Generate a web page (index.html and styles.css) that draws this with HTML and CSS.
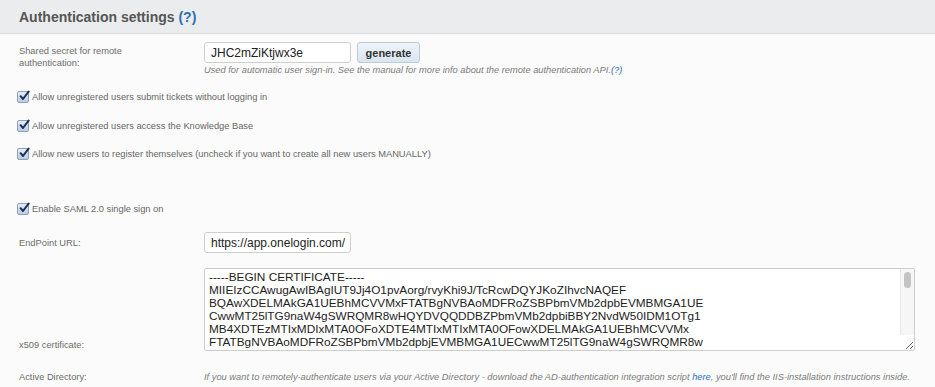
FILE: index.html
```html
<!DOCTYPE html>
<html>
<head>
  <meta http-equiv="Content-type" content="text/html; charset=utf-8">
  <link rel="stylesheet" href="styles.css">
</head>
<body>
<div class="panel">
  <div class="panel-head">
    <h2>Authentication settings <a href="#" class="help">(?)</a></h2>
  </div>

  <div class="panel-body">
    <div class="row row-secret">
      <div class="lbl">Shared secret for remote<br/>authentication:</div>
      <div class="fld">
        <div class="inline">
          <input type="text" class="txt" value="JHC2mZiKtjwx3e" />
          <button class="btn">generate</button>
        </div>
        <div class="hint">Used for automatic user sign-in. See the manual for more info about the remote authentication API.<a href="#" class="help">(?)</a></div>
      </div>
    </div>

    <label class="chk first"><span class="box"><svg viewBox="0 0 12 12"><path d="M2.6 6.2 L5 9 L10.6 1.6" /></svg></span>Allow unregistered users submit tickets without logging in</label>
    <label class="chk"><span class="box"><svg viewBox="0 0 12 12"><path d="M2.6 6.2 L5 9 L10.6 1.6" /></svg></span>Allow unregistered users access the Knowledge Base</label>
    <label class="chk"><span class="box"><svg viewBox="0 0 12 12"><path d="M2.6 6.2 L5 9 L10.6 1.6" /></svg></span>Allow new users to register themselves (uncheck if you want to create all new users MANUALLY)</label>

    <label class="chk saml"><span class="box"><svg viewBox="0 0 12 12"><path d="M2.6 6.2 L5 9 L10.6 1.6" /></svg></span>Enable SAML 2.0 single sign on</label>

    <div class="row row-url">
      <div class="lbl">EndPoint URL:</div>
      <div class="fld"><input type="text" class="txt" value="https://app.onelogin.com/trust/saml2/http-post/sso/123456" /></div>
    </div>

    <div class="row row-cert">
      <div class="lbl">x509 certificate:</div>
      <div class="fld cert-wrap"><textarea class="cert" spellcheck="false">-----BEGIN CERTIFICATE-----
MIIEIzCCAwugAwIBAgIUT9Jj4O1pvAorg/rvyKhi9J/TcRcwDQYJKoZIhvcNAQEF
BQAwXDELMAkGA1UEBhMCVVMxFTATBgNVBAoMDFRoZSBPbmVMb2dpbEVMBMGA1UE
CwwMT25lTG9naW4gSWRQMR8wHQYDVQQDDBZPbmVMb2dpbiBBY2NvdW50IDM1OTg1
MB4XDTEzMTIxMDIxMTA0OFoXDTE4MTIxMTIxMTA0OFowXDELMAkGA1UEBhMCVVMx
FTATBgNVBAoMDFRoZSBPbmVMb2dpbjEVMBMGA1UECwwMT25lTG9naW4gSWRQMR8w
HQYDVQQDDBZPbmVMb2dpbiBBY2NvdW50IDM1OTg1MIIBIjANBgkqhkiG9w0BAQEF
AAOCAQ8AMIIBCgKCAQEAzUYb4hQ8pSx2TQ5cjfQ2yP8HxXwXyQ0Xk8pLqB1rWd9o
V3kP4YJX7mQ1G0f8oS2mZ9kq6Lx2vE3RkF8cN7dA1pQ5yZ8hT0wB4eY6fM2kL9sR
tY3gC1hE7pV2uN5bW8qD4xA0jK6sF9zO3iM1lH2cR7eT5vU8yI0oP6aG4dB3nQ1X
-----END CERTIFICATE-----</textarea><div class="sbar"><div class="thumb"></div></div></div>
    </div>

    <div class="row row-ad">
      <div class="lbl">Active Directory:</div>
      <div class="fld hint">If you want to remotely-authenticate users via your Active Directory - download the AD-authentication integration script <a href="#" class="link">here</a>, you'll find the IIS-installation instructions inside.</div>
    </div>
  </div>
</div>
</body>
</html>
```

FILE: styles.css
```css
body {
  margin: 0;
  background: #fbfbfb;
  font-family: "Liberation Sans", Arial, sans-serif;
  color: #666;
}

.panel {
  width: 935px;
  height: 387px;
  overflow: hidden;
}

.panel-head {
  height: 33px;
  background: #ebeced;
  border-bottom: 1px solid #dadbdc;
  padding-left: 19px;
  display: flex;
  align-items: center;
}

.panel-head h2 {
  margin: 0;
  font-size: 14px;
  font-weight: bold;
  color: #555;
}

.help {
  color: #2c6fb7;
  text-decoration: none;
}

.panel-body {
  padding: 8px 0 0 19px;
  display: flex;
  flex-direction: column;
}

.row {
  display: grid;
  grid-template-columns: 185px auto;
  font-size: 9.3px;
}

.lbl {
  color: #6b6b6b;
  line-height: 12px;
}

.row-secret .lbl {
  padding-top: 3px;
}

.inline {
  display: flex;
  gap: 6px;
  align-items: center;
}

.txt {
  box-sizing: border-box;
  width: 147px;
  height: 21px;
  border: 1px solid #cfcfcf;
  border-radius: 3px;
  background: #fff;
  font-family: "Liberation Sans", Arial, sans-serif;
  font-size: 12px;
  color: #222;
  padding: 0 5px 0 6px;
  margin: 0;
}

.btn {
  box-sizing: border-box;
  width: 63px;
  height: 21px;
  border: 1px solid #bccbd6;
  border-radius: 3px;
  background: linear-gradient(#eef4f9, #d9e6ef);
  font-family: "Liberation Sans", Arial, sans-serif;
  font-size: 11px;
  font-weight: bold;
  color: #333;
  padding: 0;
}

.hint {
  font-style: italic;
  font-size: 9.3px;
  color: #7c7c7c;
  margin-top: 1px;
  line-height: 12px;
}

.chk {
  display: flex;
  align-items: center;
  gap: 3px;
  font-size: 9.3px;
  color: #666;
  height: 12px;
  margin-top: 16.5px;
}

.chk.first {
  margin-top: 15px;
}

.chk.saml {
  margin-top: 43px;
}

.box {
  box-sizing: border-box;
  width: 12px;
  height: 12px;
  border: 1px solid #8aa0bd;
  border-radius: 2px;
  background: linear-gradient(#e7eef8, #b9cbe4);
  position: relative;
  margin-left: -2px;
}

.box svg {
  position: absolute;
  left: 0;
  top: -2px;
  width: 12px;
  height: 12px;
}

.box path {
  fill: none;
  stroke: #1c2f55;
  stroke-width: 2;
  stroke-linecap: round;
  stroke-linejoin: round;
}

.row-url {
  margin-top: 17px;
  align-items: center;
}

.row-cert {
  margin-top: 15px;
  align-items: end;
}

.cert-wrap {
  position: relative;
  width: 711px;
}

.cert {
  box-sizing: border-box;
  width: 711px;
  height: 83px;
  border: 1px solid #cdcdcd;
  border-radius: 2px;
  background: #fff;
  font-family: "Liberation Sans", Arial, sans-serif;
  font-size: 11.8px;
  line-height: 13px;
  color: #222;
  padding: 2px 4px;
  margin: 0;
  resize: both;
  display: block;
  white-space: pre;
  overflow: hidden;
}

/* fake scrollbar, drawn over the textarea */
.sbar {
  position: absolute;
  right: 1px;
  top: 1px;
  bottom: 16px;
  width: 13px;
  background: #f6f6f6;
  border-left: 1px solid #e8e8e8;
}

.thumb {
  position: absolute;
  left: 3px;
  top: 3px;
  width: 7px;
  height: 16px;
  border-radius: 4px;
  background: #c4c4c4;
}

.row-ad {
  margin-top: 20px;
}

.row-ad .hint {
  margin-top: 0;
}

.link {
  color: #2c6fb7;
  text-decoration: none;
}
```
